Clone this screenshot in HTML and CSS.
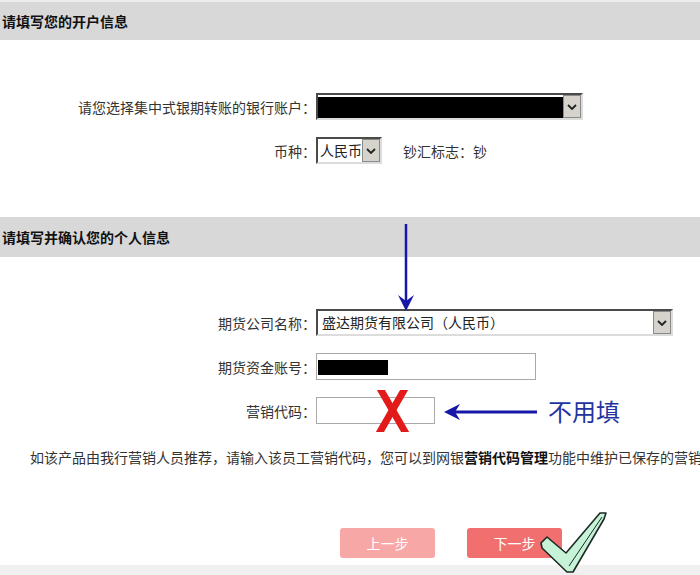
FILE: index.html
```html
<!DOCTYPE html>
<html lang="zh-CN">
<head>
<meta charset="utf-8">
<title>开户信息</title>
<link rel="stylesheet" href="styles.css">
</head>
<body>
<div class="page">
  <div class="topline"></div>
  <div class="section-head">请填写您的开户信息</div>
  <div class="section-body s1">
    <div class="row">
      <span class="label">请您选择集中式银期转账的银行账户：</span>
      <div class="select bank">
        <span class="value"></span>
        <span class="btn"><svg width="10" height="6" viewBox="0 0 10 6"><path d="M1 1 L5 5 L9 1" fill="none" stroke="#222" stroke-width="1.8"/></svg></span>
      </div>
    </div>
    <div class="row">
      <span class="label">币种：</span>
      <div class="select currency">
        <span class="value">人民币</span>
        <span class="btn"><svg width="10" height="6" viewBox="0 0 10 6"><path d="M1 1 L5 5 L9 1" fill="none" stroke="#222" stroke-width="1.8"/></svg></span>
      </div>
      <span class="flag">钞汇标志：钞</span>
    </div>
  </div>
  <div class="section-head second">请填写并确认您的个人信息</div>
  <div class="section-body s2">
    <div class="row">
      <span class="label">期货公司名称：</span>
      <div class="select company">
        <span class="value">盛达期货有限公司（人民币）</span>
        <span class="btn"><svg width="10" height="6" viewBox="0 0 10 6"><path d="M1 1 L5 5 L9 1" fill="none" stroke="#222" stroke-width="1.8"/></svg></span>
      </div>
    </div>
    <div class="row">
      <span class="label">期货资金账号：</span>
      <div class="input acct"><div class="redact"></div></div>
    </div>
    <div class="row">
      <span class="label">营销代码：</span>
      <div class="input code"></div>
    </div>
  </div>
  <div class="note">如该产品由我行营销人员推荐，请输入该员工营销代码，您可以到网银<b>营销代码管理</b>功能中维护已保存的营销代码。</div>
  <div class="actions">
    <span class="button prev">上一步</span>
    <span class="button next">下一步</span>
  </div>
  <div class="footer-band"></div>

  <svg class="marks" width="700" height="575" viewBox="0 0 700 575">
    <defs>
      <clipPath id="xclip"><rect x="370" y="390" width="45" height="42"/></clipPath>
    </defs>
    <line x1="406" y1="224" x2="406" y2="301" stroke="#1616a8" stroke-width="2.5"/>
    <polygon points="398,295 406,311 414,295 406,301" fill="#1616a8"/>
    <line x1="454" y1="412" x2="537" y2="412" stroke="#1616a8" stroke-width="3"/>
    <polygon points="444,412 460,404 455,412 460,420" fill="#1616a8"/>
    <g clip-path="url(#xclip)" stroke="#e21a1a" stroke-width="7">
      <line x1="378" y1="385" x2="408" y2="437"/>
      <line x1="407" y1="385" x2="377" y2="437"/>
    </g>
    <polygon points="541,543 547,537 566,553 600,513 606,513 604,519 573,572 567,572 542,548" fill="#c6f2d8" stroke="#1d2b24" stroke-width="1.6" stroke-linejoin="round"/>
    <line x1="569" y1="566" x2="602" y2="517" stroke="#1d2b24" stroke-width="1"/>
  </svg>
  <span class="hint">不用填</span>
</div>
</body>
</html>
```

FILE: styles.css
```css
* { box-sizing: border-box; }
html, body { margin: 0; padding: 0; overflow: hidden; background: #fff; }
body {
  font-family: "Noto Sans CJK SC", "Noto Sans", sans-serif;
  font-size: 14px;
  color: #333;
}
.page { position: relative; width: 700px; height: 575px; overflow: hidden; }
.topline { height: 2px; background: #ececec; }
.section-head {
  background: #d8d8d8;
  height: 38px;
  line-height: 38px;
  padding-left: 2px;
  font-weight: bold;
  color: #111;
}
.section-head.second { height: 40px; line-height: 40px; }
.section-body { display: flex; flex-direction: column; gap: 17px; }
.s1 { padding: 53px 0; }
.s2 { padding-top: 52px; }
.row { display: flex; align-items: center; height: 27px; }
.label { width: 316px; flex-shrink: 0; text-align: right; line-height: 20px; }
.select {
  display: flex;
  height: 27px;
  border-top: 2px solid #4a4a4a;
  border-left: 2px solid #4a4a4a;
  border-bottom: 2px solid #dcdcdc;
  border-right: 2px solid #dcdcdc;
  background: #fff;
}
.select .value {
  flex: 1;
  padding-left: 4px;
  line-height: 23px;
  color: #222;
  white-space: nowrap;
  overflow: hidden;
}
.select .btn {
  width: 18px;
  background: #d6d3cc;
  border: 1px solid #8a8a8a;
  display: flex;
  align-items: center;
  justify-content: center;
}
.bank { width: 267px; }
.bank .value { background: #000; margin-top: 2px; }
.currency { width: 66px; }
.currency .value { padding-left: 2px; }
.company { width: 357px; }
.flag { margin-left: 21px; line-height: 20px; }
.input { height: 27px; border: 1px solid #a9a9a9; background: #fff; }
.acct { width: 220px; padding: 6px 0 0 1px; }
.redact { width: 70px; height: 15px; background: #000; }
.code { width: 119px; }
.note {
  margin-top: 23px;
  padding-left: 30px;
  line-height: 20px;
  white-space: nowrap;
}
.note b { color: #111; }
.actions { display: flex; gap: 32px; padding-left: 340px; margin-top: 61px; }
.button {
  width: 95px;
  height: 30px;
  line-height: 30px;
  text-align: center;
  color: #fff;
  border-radius: 3px;
}
.prev { background: #f8a7a7; }
.next { background: #f26f6f; }
.footer-band { margin-top: 7px; height: 10px; background: #f0f0f0; }
.marks { position: absolute; left: 0; top: 0; pointer-events: none; }
.hint {
  position: absolute;
  left: 548px;
  top: 397px;
  font-size: 24px;
  line-height: 28px;
  color: #2233a0;
}
```
